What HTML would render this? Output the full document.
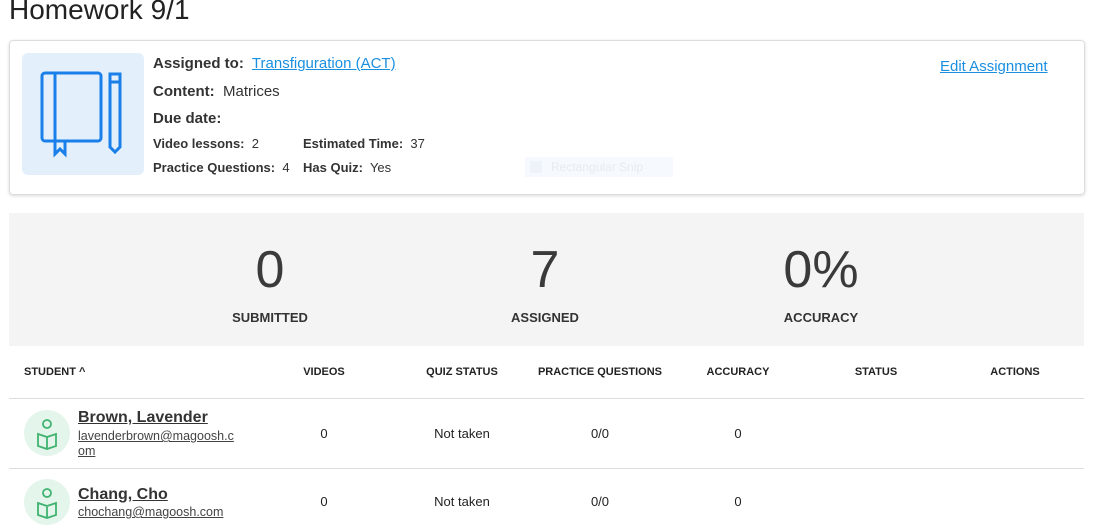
<!DOCTYPE html>
<html><head><style>
body{margin:0;width:1114px;height:520px;overflow:hidden;background:#fff;font-family:"Liberation Sans",sans-serif;color:#333;position:relative}
.a{position:absolute}
h1{position:absolute;left:9px;top:-6px;margin:0;font-weight:normal;font-size:28px;color:#222}
.card{left:9px;top:40px;width:1074px;height:153px;border:1px solid #ddd;border-radius:4px;box-shadow:0 1px 3px rgba(0,0,0,.15)}
.ico{left:22px;top:53px;width:122px;height:122px;background:#e3f0fc;border-radius:6px}
b{font-weight:bold;color:#333}
.lk{color:#1a8fe0;text-decoration:underline}
.stats{left:9px;top:213px;width:1075px;height:133px;background:#f4f4f4}
.num{font-size:52px;color:#3a3a3a;text-align:center;width:200px}
.lab{font-size:13px;font-weight:bold;text-align:center;width:200px;color:#333}
.th{font-size:11px;font-weight:bold;color:#222;top:366px;text-align:center}
.td{font-size:13px;color:#222;text-align:center}
.line{left:9px;width:1075px;height:1px;background:#ddd}
.av{width:46px;height:46px;border-radius:50%;background:#e4f5ec}
.nm{font-size:16px;font-weight:bold;text-decoration:underline;color:#333}
.em{font-size:12.5px;text-decoration:underline;color:#444;line-height:15px;width:160px;word-break:break-all}
</style></head><body>
<h1>Homework 9/1</h1>
<div class="a card"></div>
<div class="a ico"><svg width="122" height="122" viewBox="0 0 122 122" fill="none" stroke="#1a7fe8" stroke-width="3">
<rect x="20" y="20" width="59" height="68" rx="3"/><line x1="33" y1="20" x2="33" y2="88"/>
<path d="M33 88v13l5-5 5 5V88"/><path d="M88 21h10v73l-5 5-5-5z"/><line x1="88" y1="29" x2="98" y2="29"/></svg></div>
<div class="a" style="left:153px;top:55px;font-size:15px"><b>Assigned to:</b>&nbsp; <span class="lk">Transfiguration (ACT)</span></div>
<div class="a" style="left:153px;top:83px;font-size:15px"><b>Content:</b>&nbsp; Matrices</div>
<div class="a" style="left:153px;top:110px;font-size:15px"><b>Due date:</b></div>
<div class="a" style="left:153px;top:136px;font-size:13px"><b>Video lessons:</b>&nbsp; 2</div>
<div class="a" style="left:303px;top:136px;font-size:13px"><b>Estimated Time:</b>&nbsp; 37</div>
<div class="a" style="left:153px;top:160px;font-size:13px"><b>Practice Questions:</b>&nbsp; 4</div>
<div class="a" style="left:303px;top:160px;font-size:13px"><b>Has Quiz:</b>&nbsp; Yes</div>
<div class="a" style="left:525px;top:157px;width:148px;height:20px;background:#f6f9fd"></div>
<div class="a" style="left:530px;top:161px;width:12px;height:12px;background:#eef3fa"></div>
<div class="a" style="left:551px;top:160px;font-size:12px;color:#e6ebf2">Rectangular Snip</div>
<div class="a lk" style="left:940px;top:58px;font-size:15px">Edit Assignment</div>
<div class="a stats"></div>
<div class="a num" style="left:170px;top:240px">0</div><div class="a lab" style="left:170px;top:310px">SUBMITTED</div>
<div class="a num" style="left:445px;top:240px">7</div><div class="a lab" style="left:445px;top:310px">ASSIGNED</div>
<div class="a num" style="left:721px;top:240px">0%</div><div class="a lab" style="left:721px;top:310px">ACCURACY</div>
<div class="a th" style="left:24px;text-align:left">STUDENT ^</div>
<div class="a th" style="left:284px;width:80px">VIDEOS</div>
<div class="a th" style="left:412px;width:100px">QUIZ STATUS</div>
<div class="a th" style="left:530px;width:140px">PRACTICE QUESTIONS</div>
<div class="a th" style="left:688px;width:100px">ACCURACY</div>
<div class="a th" style="left:826px;width:100px">STATUS</div>
<div class="a th" style="left:965px;width:100px">ACTIONS</div>
<div class="a line" style="top:398px"></div>
<div class="a line" style="top:468px"></div>
<div class="a av" style="left:24px;top:410px"></div>
<div class="a av" style="left:24px;top:479px"></div>
<svg class="a" style="left:24px;top:410px" width="46" height="110" fill="none" stroke="#3fb36f" stroke-width="1.8">
<circle cx="23" cy="14" r="4"/><path d="M14 24l9 3 9-3v12l-9 3-9-3z M23 27v12"/><circle cx="23" cy="83" r="4"/><path d="M14 93l9 3 9-3v12l-9 3-9-3z M23 96v12"/></svg>
<div class="a nm" style="left:78px;top:409px">Brown, Lavender</div>
<div class="a em" style="left:78px;top:429px">lavenderbrown@magoosh.com</div>
<div class="a nm" style="left:78px;top:486px">Chang, Cho</div>
<div class="a em" style="left:78px;top:505px">chochang@magoosh.com</div>
<div class="a td" style="left:284px;width:80px;top:426px">0</div>
<div class="a td" style="left:412px;width:100px;top:426px">Not taken</div>
<div class="a td" style="left:550px;width:100px;top:426px">0/0</div>
<div class="a td" style="left:688px;width:100px;top:426px">0</div>
<div class="a td" style="left:284px;width:80px;top:494px">0</div>
<div class="a td" style="left:412px;width:100px;top:494px">Not taken</div>
<div class="a td" style="left:550px;width:100px;top:494px">0/0</div>
<div class="a td" style="left:688px;width:100px;top:494px">0</div>
</body></html>
